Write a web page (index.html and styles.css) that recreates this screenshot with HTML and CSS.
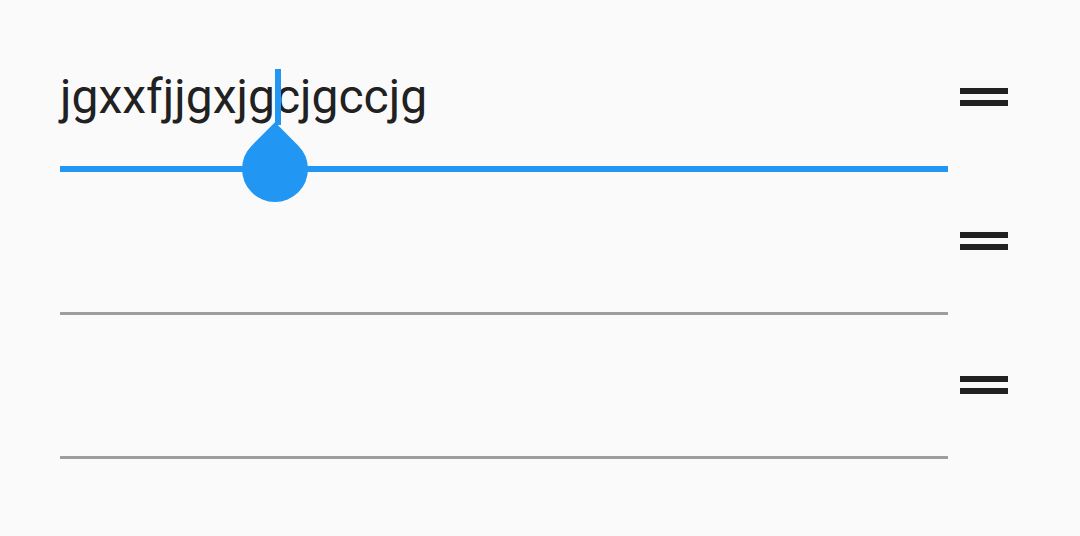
FILE: index.html
```html
<!DOCTYPE html>
<html>
<head>
<meta charset="utf-8">
<link rel="stylesheet" href="styles.css">
</head>
<body>
<div class="list">
  <div class="row">
    <div class="field focused">
      <div class="input"><span>jgxxfjjgxjg</span><span class="caret"><span class="drop"></span></span><span>cjgccjg</span></div>
      <div class="underline"></div>
    </div>
    <div class="drag">
      <svg class="drag-icon" viewBox="0 0 24 24" width="72" height="72"><path d="M4 9h16v2H4zM4 13h16v2H4z" fill="#212121"/></svg>
    </div>
  </div>
  <div class="row">
    <div class="field">
      <div class="input"></div>
      <div class="underline"></div>
    </div>
    <div class="drag">
      <svg class="drag-icon" viewBox="0 0 24 24" width="72" height="72"><path d="M4 9h16v2H4zM4 13h16v2H4z" fill="#212121"/></svg>
    </div>
  </div>
  <div class="row">
    <div class="field">
      <div class="input"></div>
      <div class="underline"></div>
    </div>
    <div class="drag">
      <svg class="drag-icon" viewBox="0 0 24 24" width="72" height="72"><path d="M4 9h16v2H4zM4 13h16v2H4z" fill="#212121"/></svg>
    </div>
  </div>
</div>
</body>
</html>
```
FILE: styles.css
```css
html, body {
  margin: 0;
  padding: 0;
  background: #fafafa;
}
body {
  width: 1080px;
  height: 536px;
  overflow: hidden;
  font-family: Roboto, "Noto Sans", sans-serif;
}
.list {
  padding: 28px 0 0 60px;
  display: flex;
  flex-direction: column;
}
.row {
  display: flex;
  height: 144px;
}
.field {
  width: 888px;
  display: flex;
  flex-direction: column;
  padding-top: 37px;
  box-sizing: border-box;
}
.input {
  height: 64px;
  line-height: 64px;
  font-size: 48px;
  color: #212121;
  white-space: nowrap;
  margin-bottom: 37px;
}
.underline {
  height: 6px;
  position: relative;
}
.underline::after {
  content: "";
  display: block;
  height: 3px;
  margin-top: 1.5px;
  background: #9e9e9e;
}
.focused .underline::after {
  height: 6px;
  margin-top: 0;
  background: #2196f3;
}
.caret {
  position: relative;
  display: inline-block;
  width: 0;
  height: 0;
}
.caret::before {
  content: "";
  position: absolute;
  left: 0;
  top: -44px;
  width: 6px;
  height: 56px;
  background: #2196f3;
}
.drop {
  position: absolute;
  left: -33px;
  top: 23px;
  width: 66px;
  height: 66px;
  background: #2196f3;
  border-radius: 0 50% 50% 50%;
  transform: rotate(45deg);
}
.drag {
  flex: 1;
  padding-top: 33px;
}
.drag-icon {
  display: block;
}
```
